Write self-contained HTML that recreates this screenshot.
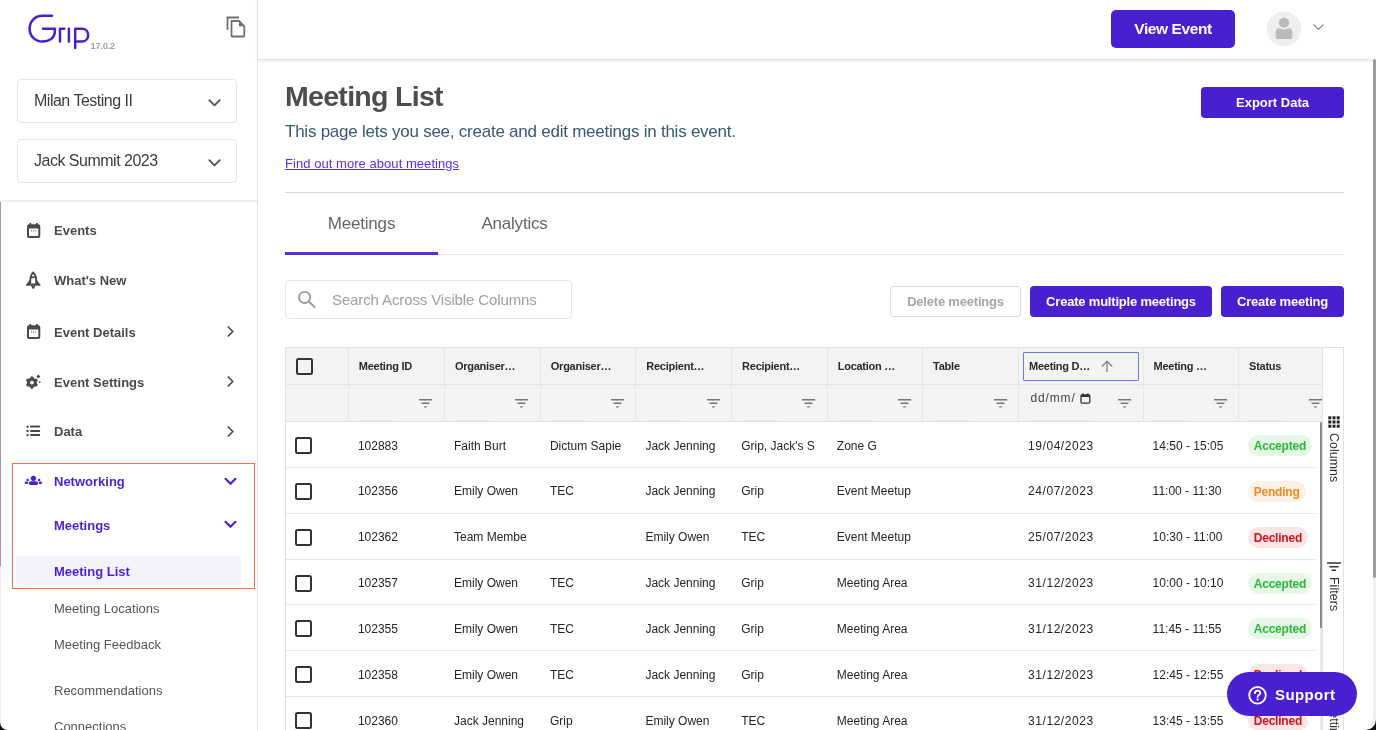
<!DOCTYPE html>
<html><head><meta charset="utf-8"><style>
*{box-sizing:border-box;margin:0;padding:0}
html,body{width:1376px;height:730px;overflow:hidden;background:#fff;font-family:"Liberation Sans",sans-serif;}
#root{position:absolute;left:0;top:0;width:1376px;height:730px;will-change:transform;background:#fff}
.a{position:absolute;white-space:nowrap}
svg.a{overflow:visible}
.sel{position:absolute;left:17px;width:220px;height:44px;border:1px solid #e4e4ec;border-radius:4px;background:#fff}
.sel span{position:absolute;left:16px;top:12px;font-size:16px;color:#3d3d3d;letter-spacing:-0.5px}
.nav{position:absolute;left:54px;font-size:13px;font-weight:700;color:#4a4a4a;line-height:13px;white-space:nowrap}
.sub{position:absolute;left:54px;font-size:13px;color:#555;line-height:13px;white-space:nowrap}
.pur{color:#4a1fd0}
.btn{position:absolute;background:#4a1fd0;color:#fff;border-radius:4px;font-weight:700;text-align:center;white-space:nowrap}
.th{position:absolute;top:347.6px;height:37px;font-size:11px;font-weight:700;color:#2a2a2a;line-height:37px;white-space:nowrap;letter-spacing:-0.25px}
.cell{position:absolute;font-size:12px;color:#252525;line-height:12px;white-space:nowrap}
.cb{position:absolute;width:17px;height:17px;border:2px solid #333;border-radius:2.5px}
.pill{position:absolute;height:21px;border-radius:11px;font-size:12px;font-weight:700;line-height:23px;padding:0 6px;white-space:nowrap;letter-spacing:-0.2px}
.acc{background:#e6f7e7;color:#2db83d}
.pen{background:#fdf0e6;color:#f68a1e}
.dec{background:#fbe6e6;color:#d3121b}
</style></head><body><div id="root">
<div class="a" style="left:257px;top:0;width:1px;height:730px;background:#e2e2e2"></div>
<svg class="a" style="left:0;top:0" width="130" height="60" viewBox="0 0 130 60">
<g fill="none" stroke="#4a1fd0" stroke-width="2.5" stroke-linecap="round" stroke-linejoin="round">
<path d="M52 15.8 H42.5 C34.8 15.8 29.6 21.6 29.6 28.7 C29.6 36 35.2 41.6 42.5 41.6 C49.5 41.6 54.8 37.5 54.8 32 V28.8 H43"/>
<path d="M60 41.4 V28.8 H64.2"/>
<path d="M68.9 28.8 V41.4"/>
<path d="M75.2 48 V28.8 H81.8 C85.6 28.8 88.2 31.6 88.2 35.2 C88.2 38.8 85.6 41.5 81.8 41.5 H75.5"/>
</g></svg>
<div class="a" style="left:90.5px;top:40.5px;font-size:9.4px;font-weight:700;color:#a3a3a3;letter-spacing:-0.3px;line-height:10px">17.0.2</div>
<svg class="a" style="left:226px;top:16px" width="20" height="22" viewBox="0 0 20 22">
<path d="M1.5 14 V1.5 H13" fill="none" stroke="#6f6f6f" stroke-width="1.8"/>
<path d="M5.5 5 H13 L18.3 10.3 V19.5 Q18.3 20.5 17.3 20.5 H6.5 Q5.5 20.5 5.5 19.5 Z" fill="none" stroke="#6f6f6f" stroke-width="1.8" stroke-linejoin="round"/>
<path d="M13 5 L18.3 10.3 H13 Z" fill="#6f6f6f"/>
</svg>
<div class="sel" style="top:79px"><span>Milan Testing II</span></div>
<svg class="a" style="left:208px;top:98.5px" width="13" height="8" viewBox="0 0 13 8"><path d="M1.3 1.2 L6.5 6.4 L11.7 1.2" fill="none" stroke="#555" stroke-width="1.9" stroke-linecap="round" stroke-linejoin="round"/></svg>
<div class="sel" style="top:139px"><span>Jack Summit 2023</span></div>
<svg class="a" style="left:208px;top:158.5px" width="13" height="8" viewBox="0 0 13 8"><path d="M1.3 1.2 L6.5 6.4 L11.7 1.2" fill="none" stroke="#555" stroke-width="1.9" stroke-linecap="round" stroke-linejoin="round"/></svg>
<div class="a" style="left:0;top:200px;width:257px;height:2px;background:#ededed"></div>
<div class="a" style="left:0;top:202px;width:1.2px;height:364px;background:#9c9c9c"></div>
<div class="a" style="left:0;top:566px;width:1.2px;height:164px;background:#ececec"></div>
<svg class="a" style="left:27px;top:222.5px" width="14" height="15" viewBox="0 0 14 15">
<rect x="1" y="2.6" width="11.3" height="11.4" rx="1.6" fill="none" stroke="#4a4a4a" stroke-width="2"/>
<rect x="0.2" y="1.6" width="12.9" height="3.9" rx="1.4" fill="#4a4a4a"/>
<rect x="2.2" y="0" width="2.2" height="2.5" rx="0.8" fill="#4a4a4a"/>
<rect x="8.9" y="0" width="2.2" height="2.5" rx="0.8" fill="#4a4a4a"/>
<circle cx="4.4" cy="7.8" r="0.6" fill="#4a4a4a"/><circle cx="6.6" cy="7.8" r="0.6" fill="#4a4a4a"/><circle cx="8.8" cy="7.8" r="0.6" fill="#4a4a4a"/>
</svg>
<svg class="a" style="left:27px;top:324px" width="14" height="15" viewBox="0 0 14 15">
<rect x="1" y="2.6" width="11.3" height="11.4" rx="1.6" fill="none" stroke="#4a4a4a" stroke-width="2"/>
<rect x="0.2" y="1.6" width="12.9" height="3.9" rx="1.4" fill="#4a4a4a"/>
<rect x="2.2" y="0" width="2.2" height="2.5" rx="0.8" fill="#4a4a4a"/>
<rect x="8.9" y="0" width="2.2" height="2.5" rx="0.8" fill="#4a4a4a"/>
<circle cx="4.4" cy="7.8" r="0.6" fill="#4a4a4a"/><circle cx="6.6" cy="7.8" r="0.6" fill="#4a4a4a"/><circle cx="8.8" cy="7.8" r="0.6" fill="#4a4a4a"/>
</svg>
<svg class="a" style="left:26px;top:271px" width="15" height="18" viewBox="0 0 15 18">
<path d="M7.25 1.3 C5.2 3.3 4.3 6 4.3 9 V13.4 H10.2 V9 C10.2 6 9.3 3.3 7.25 1.3 Z" fill="none" stroke="#4a4a4a" stroke-width="1.8" stroke-linejoin="round"/>
<path d="M4.6 6.2 H9.9" stroke="#4a4a4a" stroke-width="1.7"/>
<path d="M4.3 8.8 L0.3 14.2 H4.3 Z M10.2 8.8 L14.2 14.2 H10.2 Z" fill="#4a4a4a" stroke="#4a4a4a" stroke-width="1" stroke-linejoin="round"/>
<path d="M5.6 14 L7.25 17 L8.9 14" fill="none" stroke="#4a4a4a" stroke-width="1.7" stroke-linejoin="round"/>
</svg>
<svg class="a" style="left:26px;top:374px" width="16" height="16" viewBox="0 0 16 16">
<g fill="#4a4a4a"><circle cx="5.9" cy="8.6" r="4.9"/>
<circle cx="5.9" cy="4.1" r="1.8"/><circle cx="5.9" cy="13.1" r="1.8"/>
<circle cx="2" cy="6.35" r="1.8"/><circle cx="9.8" cy="6.35" r="1.8"/>
<circle cx="2" cy="10.85" r="1.8"/><circle cx="9.8" cy="10.85" r="1.8"/>
<path d="M12.3 0.6 L14.3 2.6 L12.3 4.6 L10.3 2.6 Z"/><circle cx="13.7" cy="8.2" r="0.9"/></g>
<circle cx="5.9" cy="8.6" r="1.9" fill="#fff"/>
</svg>
<svg class="a" style="left:26px;top:424px" width="15" height="13" viewBox="0 0 15 13">
<g fill="#4a4a4a"><circle cx="1.6" cy="2.6" r="1.2"/><circle cx="1.6" cy="7" r="1.2"/><circle cx="1.6" cy="11.1" r="1.2"/></g>
<g stroke="#4a4a4a" stroke-width="2" stroke-linecap="round"><path d="M5 2.6 H13.2 M5 7 H13.2 M5 11.1 H13.2"/></g>
</svg>
<svg class="a" style="left:24px;top:474px" width="19" height="13" viewBox="0 0 19 13">
<g fill="#4a1fd0"><circle cx="9.4" cy="4.3" r="2.6"/>
<rect x="5" y="7.2" width="8.9" height="3.9" rx="1.6"/>
<circle cx="3.6" cy="5.9" r="1.25"/><circle cx="15.1" cy="5.9" r="1.25"/>
<ellipse cx="2.4" cy="8.8" rx="1.8" ry="1.2"/><ellipse cx="16.4" cy="8.8" rx="1.8" ry="1.2"/></g>
</svg>
<svg class="a" style="left:226px;top:325px" width="10" height="13" viewBox="0 0 10 13"><path d="M2.3 2 L6.8 6.5 L2.3 11" fill="none" stroke="#4a4a4a" stroke-width="1.7" stroke-linecap="round" stroke-linejoin="round"/></svg>
<svg class="a" style="left:226px;top:375px" width="10" height="13" viewBox="0 0 10 13"><path d="M2.3 2 L6.8 6.5 L2.3 11" fill="none" stroke="#4a4a4a" stroke-width="1.7" stroke-linecap="round" stroke-linejoin="round"/></svg>
<svg class="a" style="left:226px;top:424.5px" width="10" height="13" viewBox="0 0 10 13"><path d="M2.3 2 L6.8 6.5 L2.3 11" fill="none" stroke="#4a4a4a" stroke-width="1.7" stroke-linecap="round" stroke-linejoin="round"/></svg>
<svg class="a" style="left:224px;top:476.5px" width="13" height="9" viewBox="0 0 13 9"><path d="M1.5 1.8 L6.5 6.8 L11.5 1.8" fill="none" stroke="#4a1fd0" stroke-width="2.1" stroke-linecap="round" stroke-linejoin="round"/></svg>
<svg class="a" style="left:224px;top:520px" width="13" height="9" viewBox="0 0 13 9"><path d="M1.5 1.8 L6.5 6.8 L11.5 1.8" fill="none" stroke="#4a1fd0" stroke-width="2.1" stroke-linecap="round" stroke-linejoin="round"/></svg>
<div class="nav" style="top:224px">Events</div>
<div class="nav" style="top:274px">What's New</div>
<div class="nav" style="top:326px">Event Details</div>
<div class="nav" style="top:376px">Event Settings</div>
<div class="nav" style="top:425px">Data</div>
<div class="nav pur" style="top:475px">Networking</div>
<div class="nav pur" style="top:519px">Meetings</div>
<div class="a" style="left:16px;top:556px;width:225px;height:29px;background:#f4f3fc;border-radius:4px"></div>
<div class="nav pur" style="top:565px">Meeting List</div>
<div class="sub" style="top:602px">Meeting Locations</div>
<div class="sub" style="top:638px">Meeting Feedback</div>
<div class="sub" style="top:684px">Recommendations</div>
<div class="sub" style="top:720px">Connections</div>
<div class="a" style="left:12px;top:463px;width:243px;height:126px;border:1.6px solid #f5694d"></div>
<div class="a" style="left:258px;top:0;width:1118px;height:60px;background:#fff;box-shadow:0 1px 3px rgba(0,0,0,0.08);border-bottom:1px solid #e4e4e4"></div>
<div class="btn" style="left:1111px;top:9.5px;width:124px;height:38px;font-size:15.5px;line-height:38px;border-radius:5px;letter-spacing:-0.4px">View Event</div>
<svg class="a" style="left:1266px;top:11px" width="36" height="36" viewBox="0 0 36 36">
<circle cx="18" cy="17.8" r="17.4" fill="#efefef"/>
<circle cx="18" cy="11.8" r="5" fill="#bababa"/>
<path d="M9.6 33 V21.5 Q9.6 17.3 13.8 17.3 Q15.5 18.5 18 18.5 Q20.5 18.5 22.2 17.3 Q26.4 17.3 26.4 21.5 V25.5 Q26.4 28 24 28 H12 Q9.6 28 9.6 25.5 Z" fill="#bababa"/>
</svg>
<svg class="a" style="left:1313px;top:24px" width="11" height="6" viewBox="0 0 11 6"><path d="M0.5 0.5 L5.5 5.3 L10.5 0.5" fill="none" stroke="#8c8c8c" stroke-width="1.2"/></svg>
<div class="a" style="left:1373px;top:578px;width:3px;height:152px;background:#efefef"></div>
<div class="a" style="left:1373px;top:59px;width:3px;height:519px;background:#9c9c9c;border-radius:1.5px"></div>
<div class="a" style="left:285px;top:80px;font-size:28.5px;font-weight:700;color:#4d4d4d;letter-spacing:-0.7px">Meeting List</div>
<div class="a" style="left:285px;top:121.5px;font-size:17px;color:#345a78;letter-spacing:-0.24px">This page lets you see, create and edit meetings in this event.</div>
<div class="a" style="left:285px;top:156px;font-size:13px;color:#5a2ee0;text-decoration:underline;letter-spacing:0.05px">Find out more about meetings</div>
<div class="btn" style="left:1201px;top:87px;width:143px;height:31px;font-size:13px;line-height:31px">Export Data</div>
<div class="a" style="left:285px;top:192px;width:1059px;height:1px;background:#d6d6d6"></div>
<div class="a" style="left:285px;top:213.5px;width:153px;text-align:center;font-size:17px;color:#666;letter-spacing:-0.2px">Meetings</div>
<div class="a" style="left:438px;top:213.5px;width:153px;text-align:center;font-size:17px;color:#666;letter-spacing:-0.2px">Analytics</div>
<div class="a" style="left:285px;top:254px;width:1059px;height:1px;background:#e6e6e6"></div>
<div class="a" style="left:285px;top:252px;width:153px;height:3px;background:#5a2ee0"></div>
<div class="a" style="left:285px;top:280px;width:287px;height:39px;border:1px solid #e4e4ec;border-radius:4px"></div>
<svg class="a" style="left:297px;top:290px" width="20" height="20" viewBox="0 0 20 20"><circle cx="7.6" cy="7.4" r="5.6" fill="none" stroke="#9a9a9a" stroke-width="1.8"/><path d="M11.7 11.5 L17.6 17" stroke="#9a9a9a" stroke-width="1.9" stroke-linecap="round"/></svg>
<div class="a" style="left:332px;top:291px;font-size:15px;color:#a0a0a0;letter-spacing:-0.12px">Search Across Visible Columns</div>
<div class="a" style="left:890px;top:286px;width:131px;height:31px;border:1px solid #dcdcdc;border-radius:3px;font-size:13px;font-weight:700;color:#a5a5a5;text-align:center;line-height:29px;letter-spacing:-0.2px">Delete meetings</div>
<div class="btn" style="left:1030px;top:286px;width:182px;height:31px;font-size:13px;line-height:31px;letter-spacing:-0.2px">Create multiple meetings</div>
<div class="btn" style="left:1221px;top:286px;width:123px;height:31px;font-size:13px;line-height:31px;letter-spacing:-0.2px">Create meeting</div>
<div class="a" style="left:285px;top:347px;width:1059px;height:400px;border:1px solid #e2e2e2;border-bottom:none"></div>
<div class="a" style="left:286px;top:348px;width:1036px;height:73px;background:#f3f3f3"></div>
<div class="a" style="left:286px;top:384px;width:1036px;height:1px;background:#e4e4e4"></div>
<div class="a" style="left:286px;top:421px;width:1036px;height:1px;background:#e2e2e2"></div>
<div class="a" style="left:347.8px;top:348px;width:0;height:73px;border-left:1px solid #e6e6e6"></div>
<div class="a" style="left:443.9px;top:348px;width:0;height:73px;border-left:1px solid #e6e6e6"></div>
<div class="a" style="left:539.8px;top:348px;width:0;height:73px;border-left:1px solid #e6e6e6"></div>
<div class="a" style="left:635.3px;top:348px;width:0;height:73px;border-left:1px solid #e6e6e6"></div>
<div class="a" style="left:731.1px;top:348px;width:0;height:73px;border-left:1px solid #e6e6e6"></div>
<div class="a" style="left:826.7px;top:348px;width:0;height:73px;border-left:1px solid #e6e6e6"></div>
<div class="a" style="left:922.1px;top:348px;width:0;height:73px;border-left:1px solid #e6e6e6"></div>
<div class="a" style="left:1018.0px;top:348px;width:0;height:73px;border-left:1px solid #e6e6e6"></div>
<div class="a" style="left:1142.5px;top:348px;width:0;height:73px;border-left:1px solid #e6e6e6"></div>
<div class="a" style="left:1238.1px;top:348px;width:0;height:73px;border-left:1px solid #e6e6e6"></div>
<div class="cb" style="left:296px;top:358px"></div>
<div class="th" style="left:358.8px">Meeting ID</div>
<svg class="a" style="left:419.4px;top:399px" width="13" height="9" viewBox="0 0 13 9"><path d="M0 0.75H13M2.6 4.3H10.4M5.2 7.9H7.8" stroke="#777" stroke-width="1.4"/></svg>
<div class="a" style="left:358.3px;top:419.5px;width:36px;height:1.5px;background:#e9e9e9"></div>
<div class="th" style="left:454.9px">Organiser…</div>
<svg class="a" style="left:515.3px;top:399px" width="13" height="9" viewBox="0 0 13 9"><path d="M0 0.75H13M2.6 4.3H10.4M5.2 7.9H7.8" stroke="#777" stroke-width="1.4"/></svg>
<div class="a" style="left:454.4px;top:419.5px;width:36px;height:1.5px;background:#e9e9e9"></div>
<div class="th" style="left:550.8px">Organiser…</div>
<svg class="a" style="left:610.8px;top:399px" width="13" height="9" viewBox="0 0 13 9"><path d="M0 0.75H13M2.6 4.3H10.4M5.2 7.9H7.8" stroke="#777" stroke-width="1.4"/></svg>
<div class="a" style="left:550.3px;top:419.5px;width:36px;height:1.5px;background:#e9e9e9"></div>
<div class="th" style="left:646.3px">Recipient…</div>
<svg class="a" style="left:706.6px;top:399px" width="13" height="9" viewBox="0 0 13 9"><path d="M0 0.75H13M2.6 4.3H10.4M5.2 7.9H7.8" stroke="#777" stroke-width="1.4"/></svg>
<div class="a" style="left:645.8px;top:419.5px;width:36px;height:1.5px;background:#e9e9e9"></div>
<div class="th" style="left:742.1px">Recipient…</div>
<svg class="a" style="left:802.2px;top:399px" width="13" height="9" viewBox="0 0 13 9"><path d="M0 0.75H13M2.6 4.3H10.4M5.2 7.9H7.8" stroke="#777" stroke-width="1.4"/></svg>
<div class="a" style="left:741.6px;top:419.5px;width:36px;height:1.5px;background:#e9e9e9"></div>
<div class="th" style="left:837.7px">Location …</div>
<svg class="a" style="left:897.6px;top:399px" width="13" height="9" viewBox="0 0 13 9"><path d="M0 0.75H13M2.6 4.3H10.4M5.2 7.9H7.8" stroke="#777" stroke-width="1.4"/></svg>
<div class="a" style="left:837.2px;top:419.5px;width:36px;height:1.5px;background:#e9e9e9"></div>
<div class="th" style="left:933.1px">Table</div>
<svg class="a" style="left:993.5px;top:399px" width="13" height="9" viewBox="0 0 13 9"><path d="M0 0.75H13M2.6 4.3H10.4M5.2 7.9H7.8" stroke="#777" stroke-width="1.4"/></svg>
<div class="a" style="left:932.6px;top:419.5px;width:36px;height:1.5px;background:#e9e9e9"></div>
<div class="th" style="left:1029.0px">Meeting D…</div>
<svg class="a" style="left:1118.0px;top:399px" width="13" height="9" viewBox="0 0 13 9"><path d="M0 0.75H13M2.6 4.3H10.4M5.2 7.9H7.8" stroke="#777" stroke-width="1.4"/></svg>
<div class="a" style="left:1028.5px;top:419.5px;width:64px;height:1.5px;background:#e9e9e9"></div>
<div class="th" style="left:1153.5px">Meeting …</div>
<svg class="a" style="left:1213.6px;top:399px" width="13" height="9" viewBox="0 0 13 9"><path d="M0 0.75H13M2.6 4.3H10.4M5.2 7.9H7.8" stroke="#777" stroke-width="1.4"/></svg>
<div class="a" style="left:1153.0px;top:419.5px;width:36px;height:1.5px;background:#e9e9e9"></div>
<div class="th" style="left:1249.1px">Status</div>
<svg class="a" style="left:1309.0px;top:399px" width="13" height="9" viewBox="0 0 13 9"><path d="M0 0.75H13M2.6 4.3H10.4M5.2 7.9H7.8" stroke="#777" stroke-width="1.4"/></svg>
<div class="a" style="left:1248.6px;top:419.5px;width:36px;height:1.5px;background:#e9e9e9"></div>
<div class="a" style="left:1023px;top:352px;width:116px;height:29px;border:1.5px solid #6b7bd6;border-radius:1px"></div>
<svg class="a" style="left:1100px;top:360px" width="14" height="13" viewBox="0 0 14 13"><path d="M7 12 V1.5 M1.8 6.5 L7 1.3 L12.2 6.5" fill="none" stroke="#888" stroke-width="1.4"/></svg>
<div class="a" style="left:1030.5px;top:392px;font-size:12px;color:#444;line-height:12px;letter-spacing:0.85px">dd/mm/</div>
<svg class="a" style="left:1080px;top:392.5px" width="11" height="11" viewBox="0 0 11 11"><rect x="1" y="1.8" width="8.8" height="8.3" rx="1" fill="none" stroke="#333" stroke-width="1.3"/><rect x="1" y="1.8" width="8.8" height="2.2" fill="#333"/><path d="M3 0.3V2 M7.8 0.3V2" stroke="#333" stroke-width="1.2"/></svg>
<div class="cb" style="left:295px;top:437.0px"></div>
<div class="cell" style="left:357.9px;top:439.6px">102883</div>
<div class="cell" style="left:454.0px;top:439.6px">Faith Burt</div>
<div class="cell" style="left:549.9px;top:439.6px">Dictum Sapie</div>
<div class="cell" style="left:645.4px;top:439.6px">Jack Jenning</div>
<div class="cell" style="left:741.2px;top:439.6px">Grip, Jack's S</div>
<div class="cell" style="left:836.8px;top:439.6px">Zone G</div>
<div class="cell" style="left:1028.1px;top:439.6px;letter-spacing:0.55px">19/04/2023</div>
<div class="cell" style="left:1152.6px;top:439.6px">14:50 - 15:05</div>
<div class="pill acc" style="left:1247.7px;top:435.0px">Accepted</div>
<div class="a" style="left:286px;top:466.85px;width:1029px;height:1px;background:#e6e6e6"></div>
<div class="cb" style="left:295px;top:482.85px"></div>
<div class="cell" style="left:357.9px;top:485.45000000000005px">102356</div>
<div class="cell" style="left:454.0px;top:485.45000000000005px">Emily Owen</div>
<div class="cell" style="left:549.9px;top:485.45000000000005px">TEC</div>
<div class="cell" style="left:645.4px;top:485.45000000000005px">Jack Jenning</div>
<div class="cell" style="left:741.2px;top:485.45000000000005px">Grip</div>
<div class="cell" style="left:836.8px;top:485.45000000000005px">Event Meetup</div>
<div class="cell" style="left:1028.1px;top:485.45000000000005px;letter-spacing:0.55px">24/07/2023</div>
<div class="cell" style="left:1152.6px;top:485.45000000000005px">11:00 - 11:30</div>
<div class="pill pen" style="left:1247.7px;top:480.85px">Pending</div>
<div class="a" style="left:286px;top:512.7px;width:1029px;height:1px;background:#e6e6e6"></div>
<div class="cb" style="left:295px;top:528.7px"></div>
<div class="cell" style="left:357.9px;top:531.3000000000001px">102362</div>
<div class="cell" style="left:454.0px;top:531.3000000000001px">Team Membe</div>
<div class="cell" style="left:645.4px;top:531.3000000000001px">Emily Owen</div>
<div class="cell" style="left:741.2px;top:531.3000000000001px">TEC</div>
<div class="cell" style="left:836.8px;top:531.3000000000001px">Event Meetup</div>
<div class="cell" style="left:1028.1px;top:531.3000000000001px;letter-spacing:0.55px">25/07/2023</div>
<div class="cell" style="left:1152.6px;top:531.3000000000001px">10:30 - 11:00</div>
<div class="pill dec" style="left:1247.7px;top:526.7px">Declined</div>
<div class="a" style="left:286px;top:558.55px;width:1029px;height:1px;background:#e6e6e6"></div>
<div class="cb" style="left:295px;top:574.55px"></div>
<div class="cell" style="left:357.9px;top:577.15px">102357</div>
<div class="cell" style="left:454.0px;top:577.15px">Emily Owen</div>
<div class="cell" style="left:549.9px;top:577.15px">TEC</div>
<div class="cell" style="left:645.4px;top:577.15px">Jack Jenning</div>
<div class="cell" style="left:741.2px;top:577.15px">Grip</div>
<div class="cell" style="left:836.8px;top:577.15px">Meeting Area</div>
<div class="cell" style="left:1028.1px;top:577.15px;letter-spacing:0.55px">31/12/2023</div>
<div class="cell" style="left:1152.6px;top:577.15px">10:00 - 10:10</div>
<div class="pill acc" style="left:1247.7px;top:572.55px">Accepted</div>
<div class="a" style="left:286px;top:604.4px;width:1029px;height:1px;background:#e6e6e6"></div>
<div class="cb" style="left:295px;top:620.4px"></div>
<div class="cell" style="left:357.9px;top:623.0px">102355</div>
<div class="cell" style="left:454.0px;top:623.0px">Emily Owen</div>
<div class="cell" style="left:549.9px;top:623.0px">TEC</div>
<div class="cell" style="left:645.4px;top:623.0px">Jack Jenning</div>
<div class="cell" style="left:741.2px;top:623.0px">Grip</div>
<div class="cell" style="left:836.8px;top:623.0px">Meeting Area</div>
<div class="cell" style="left:1028.1px;top:623.0px;letter-spacing:0.55px">31/12/2023</div>
<div class="cell" style="left:1152.6px;top:623.0px">11:45 - 11:55</div>
<div class="pill acc" style="left:1247.7px;top:618.4px">Accepted</div>
<div class="a" style="left:286px;top:650.25px;width:1029px;height:1px;background:#e6e6e6"></div>
<div class="cb" style="left:295px;top:666.25px"></div>
<div class="cell" style="left:357.9px;top:668.85px">102358</div>
<div class="cell" style="left:454.0px;top:668.85px">Emily Owen</div>
<div class="cell" style="left:549.9px;top:668.85px">TEC</div>
<div class="cell" style="left:645.4px;top:668.85px">Jack Jenning</div>
<div class="cell" style="left:741.2px;top:668.85px">Grip</div>
<div class="cell" style="left:836.8px;top:668.85px">Meeting Area</div>
<div class="cell" style="left:1028.1px;top:668.85px;letter-spacing:0.55px">31/12/2023</div>
<div class="cell" style="left:1152.6px;top:668.85px">12:45 - 12:55</div>
<div class="pill dec" style="left:1247.7px;top:664.25px">Declined</div>
<div class="a" style="left:286px;top:696.1px;width:1029px;height:1px;background:#e6e6e6"></div>
<div class="cb" style="left:295px;top:712.1px"></div>
<div class="cell" style="left:357.9px;top:714.7px">102360</div>
<div class="cell" style="left:454.0px;top:714.7px">Jack Jenning</div>
<div class="cell" style="left:549.9px;top:714.7px">Grip</div>
<div class="cell" style="left:645.4px;top:714.7px">Emily Owen</div>
<div class="cell" style="left:741.2px;top:714.7px">TEC</div>
<div class="cell" style="left:836.8px;top:714.7px">Meeting Area</div>
<div class="cell" style="left:1028.1px;top:714.7px;letter-spacing:0.55px">31/12/2023</div>
<div class="cell" style="left:1152.6px;top:714.7px">13:45 - 13:55</div>
<div class="pill dec" style="left:1247.7px;top:710.1px">Declined</div>
<div class="a" style="left:1322px;top:348px;width:21px;height:382px;background:#fff;border-left:1px solid #e2e2e2"></div>
<div class="a" style="left:1319.5px;top:421.5px;width:2.5px;height:207px;background:#8c8c8c;border-radius:1px"></div>
<div class="a" style="left:1320px;top:628px;width:1.5px;height:102px;background:#ececec"></div>
<svg class="a" style="left:1328px;top:415.5px" width="12" height="12" viewBox="0 0 12 12"><g fill="#222"><rect x="0.3" y="0.3" width="3" height="3"/><rect x="0.3" y="4.5" width="3" height="3"/><rect x="0.3" y="8.700000000000001" width="3" height="3"/><rect x="4.5" y="0.3" width="3" height="3"/><rect x="4.5" y="4.5" width="3" height="3"/><rect x="4.5" y="8.700000000000001" width="3" height="3"/><rect x="8.700000000000001" y="0.3" width="3" height="3"/><rect x="8.700000000000001" y="4.5" width="3" height="3"/><rect x="8.700000000000001" y="8.700000000000001" width="3" height="3"/></g></svg>
<div class="a" style="left:1339.5px;top:433px;font-size:12.3px;color:#333;line-height:12px;transform:rotate(90deg);transform-origin:0 0;letter-spacing:0.1px">Columns</div>
<svg class="a" style="left:1327px;top:561px" width="14" height="11" viewBox="0 0 14 11"><path d="M0.6 2 H13.3 M2.9 5.7 H11.1 M5.2 9.3 H8.5" stroke="#333" stroke-width="1.6" stroke-linecap="round"/></svg>
<div class="a" style="left:1339.5px;top:577px;font-size:12.3px;color:#333;line-height:12px;transform:rotate(90deg);transform-origin:0 0;letter-spacing:0.1px">Filters</div>
<div class="a" style="left:1339.5px;top:702.5px;font-size:12.3px;color:#333;line-height:12px;transform:rotate(90deg);transform-origin:0 0;letter-spacing:0.1px">Settings</div>
<div class="a" style="left:1227px;top:672px;width:130px;height:44px;border-radius:22px;background:#4a1fd0"></div>
<svg class="a" style="left:1248px;top:686px" width="20" height="19" viewBox="0 0 20 19"><circle cx="9.5" cy="9.3" r="8.3" fill="none" stroke="#fff" stroke-width="1.8"/><path d="M6.9 7.2 Q6.9 4.6 9.6 4.6 Q12.2 4.6 12.2 7 Q12.2 8.4 10.6 9.2 Q9.6 9.8 9.6 11" fill="none" stroke="#fff" stroke-width="1.8" stroke-linecap="round"/><circle cx="9.6" cy="13.6" r="1.1" fill="#fff"/></svg>
<div class="a" style="left:1275px;top:686px;font-size:15px;font-weight:700;color:#fff;letter-spacing:0.4px">Support</div>
<svg class="a" style="left:0;top:718px" width="12" height="12" viewBox="0 0 12 12"><path d="M0 4.2 A7.8 7.8 0 0 0 7.8 12 H0 Z" fill="#111"/></svg>
<svg class="a" style="left:1364px;top:718px" width="12" height="12" viewBox="0 0 12 12"><path d="M12 1.5 A10.5 10.5 0 0 1 1.5 12 H12 Z" fill="#111"/></svg>
</div></body></html>
